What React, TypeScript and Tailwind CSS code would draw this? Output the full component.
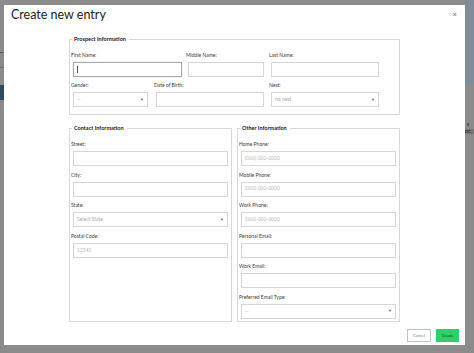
import React from "react";

const font = { fontFamily: "Lato, 'Open Sans', sans-serif" };

function Label({ children }: { children: React.ReactNode }) {
  return <div className="h-[7px] text-[5px] leading-[7px] text-[#3a3a3a] whitespace-nowrap">{children}</div>;
}

function TextInput({ width, placeholder, focused }: { width: string; placeholder?: string; focused?: boolean }) {
  return (
    <div
      className={`${width} ml-[2px] mt-[3px] h-[15px] flex items-center px-[3px] bg-white border ${
        focused ? "border-[#a9a9a9] shadow-[0_0_1px_#bbb]" : "border-[#d6d6d6]"
      }`}
    >
      {focused && <div className="w-[1px] h-[7px] bg-[#555]" />}
      {placeholder && <span className="text-[5px] text-[#b9b9b9] whitespace-nowrap">{placeholder}</span>}
    </div>
  );
}

function SelectInput({ width, value }: { width: string; value: string }) {
  return (
    <div className={`${width} ml-[2px] mt-[3px] h-[15px] flex items-center justify-between px-[3px] bg-white border border-[#d6d6d6]`}>
      <span className="text-[5px] text-[#a9a9a9] whitespace-nowrap">{value}</span>
      <span className="text-[4px] text-[#666]">▼</span>
    </div>
  );
}

function Field({ label, children, className = "" }: { label: string; children: React.ReactNode; className?: string }) {
  return (
    <div className={className}>
      <Label>{label}</Label>
      {children}
    </div>
  );
}

function Section({ title, children, className = "" }: { title: string; children: React.ReactNode; className?: string }) {
  return (
    <fieldset className={`border border-[#d9d9d9] pl-[1px] pr-[3px] pt-[9px] m-0 min-w-0 ${className}`}>
      <legend className="ml-[1px] px-[2px] pr-[3px] text-[5.5px] leading-[8px] font-bold text-[#222]">{title}</legend>
      {children}
    </fieldset>
  );
}

export default function App() {
  return (
    <div className="relative w-[474px] h-[353px] overflow-hidden bg-[#8b8b8b]" style={font}>
      {/* page behind the overlay */}
      <div className="absolute left-0 top-[85px] w-[4px] h-[15px] bg-[#2d4a63]" />
      <div className="absolute left-0 top-[52px] w-[3px] h-[1px] bg-[#555]" />
      <div className="absolute left-0 top-[67px] w-[3px] h-[1px] bg-[#666]" />
      <div className="absolute right-0 top-0 w-[9px] h-[84px] bg-[#7f8d99]" />
      <div className="absolute left-[467px] top-[121px] text-[5px] leading-[6px] text-[#222]">s</div>
      <div className="absolute left-[465px] top-[129px] w-[9px] h-[5px] bg-[#777] text-[4px] leading-[5px] text-[#111]">DC</div>

      <div className="pt-[5px] pl-[4px]">
        <div className="w-[461px] h-[340px] bg-white flex flex-col">
          <div className="flex items-start justify-between h-[30px]">
            <h1 className="ml-[7px] mt-[1px] text-[12.5px] leading-[18px] text-[#222] font-normal">Create new entry</h1>
            <button className="mr-[8px] mt-[5px] text-[8px] leading-[8px] text-[#666]">×</button>
          </div>

          <div className="mx-auto w-[331px]">
            <Section title="Prospect Information" className="h-[80px]">
              <div className="flex">
                <Field label="First Name:" className="w-[115px]">
                  <TextInput width="w-[109px]" focused />
                </Field>
                <Field label="Middle Name:" className="w-[83px]">
                  <TextInput width="w-[76px]" />
                </Field>
                <Field label="Last Name:" className="w-[115px]">
                  <TextInput width="w-[108px]" />
                </Field>
              </div>
              <div className="flex mt-[5px]">
                <Field label="Gender:" className="w-[83px]">
                  <SelectInput width="w-[75px]" value="--" />
                </Field>
                <Field label="Date of Birth:" className="w-[115px]">
                  <TextInput width="w-[108px]" />
                </Field>
                <Field label="Nest:" className="w-[115px]">
                  <SelectInput width="w-[108px]" value="no nest" />
                </Field>
              </div>
            </Section>

            <div className="flex gap-[5px] mt-[9px]">
              <Section title="Contact Information" className="w-[163px] h-[198px]">
                <div className="flex flex-col gap-[5.6px]">
                  <Field label="Street:">
                    <TextInput width="w-[155px]" />
                  </Field>
                  <Field label="City:">
                    <TextInput width="w-[155px]" />
                  </Field>
                  <Field label="State:">
                    <SelectInput width="w-[155px]" value="Select State" />
                  </Field>
                  <Field label="Postal Code:">
                    <TextInput width="w-[155px]" placeholder="12345" />
                  </Field>
                </div>
              </Section>
              <Section title="Other Information" className="w-[163px] h-[198px]">
                <div className="flex flex-col gap-[5.6px]">
                  <Field label="Home Phone:">
                    <TextInput width="w-[155px]" placeholder="(000) 000-0000" />
                  </Field>
                  <Field label="Mobile Phone:">
                    <TextInput width="w-[155px]" placeholder="(000) 000-0000" />
                  </Field>
                  <Field label="Work Phone:">
                    <TextInput width="w-[155px]" placeholder="(000) 000-0000" />
                  </Field>
                  <Field label="Personal Email:">
                    <TextInput width="w-[155px]" />
                  </Field>
                  <Field label="Work Email:">
                    <TextInput width="w-[155px]" />
                  </Field>
                  <Field label="Preferred Email Type:">
                    <SelectInput width="w-[155px]" value="--" />
                  </Field>
                </div>
              </Section>
            </div>
          </div>

          <div className="flex justify-end gap-[5px] mt-auto mb-[3px] mr-[6px]">
            <button className="w-[24px] h-[13px] border border-[#b8c4cf] bg-white text-[4px] text-[#6a7f93]">Cancel</button>
            <button className="w-[23px] h-[13px] bg-[#33cc6a] text-[4px] text-[#124a26]">Create</button>
          </div>
        </div>
      </div>
    </div>
  );
}
